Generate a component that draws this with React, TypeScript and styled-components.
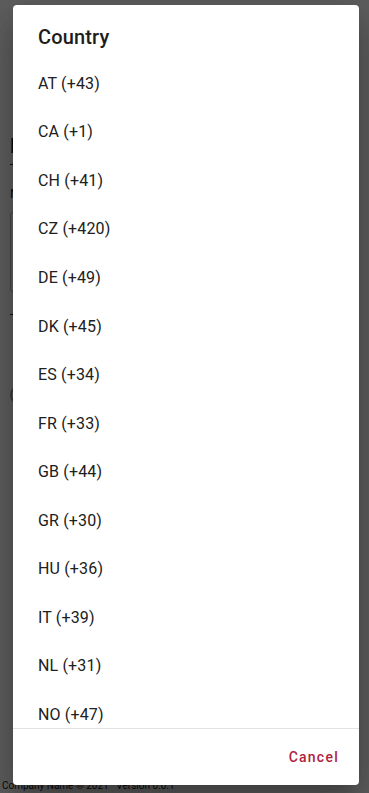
import React from 'react';
import styled, { createGlobalStyle } from 'styled-components';

const GlobalStyle = createGlobalStyle`
    html, body {
        margin: 0;
        padding: 0;
        height: 100%;
        overflow: hidden;
    }
    body {
        font-family: Roboto, 'Noto Sans', Arial, sans-serif;
        background: #fff;
    }
    #root {
        height: 100%;
    }
`;

const Page = styled.div`
    position: relative;
    width: 369px;
    height: 793px;
    display: flex;
    flex-direction: column;
    background: #fff;
    color: #222;
`;

const Section = styled.div`
    padding: 132px 10px 0;
    display: flex;
    flex-direction: column;
`;

const Heading = styled.h2`
    margin: 0;
    font-size: 20px;
    font-weight: 500;
    line-height: 28px;
`;

const Rule = styled.hr<{ $top: number }>`
    margin: ${(p) => p.$top}px 0 0;
    border: 0;
    border-top: 1px solid #333;
`;

const FieldLabel = styled.div`
    margin-top: 20px;
    font-size: 13px;
    line-height: 18px;
`;

const Input = styled.div`
    margin-top: 8px;
    height: 80px;
    border: 1px solid #bbb;
    border-radius: 4px;
`;

const Radio = styled.span`
    margin-top: 70px;
    width: 16px;
    height: 16px;
    border: 2px solid #999;
    border-radius: 50%;
`;

const Footer = styled.div`
    margin-top: auto;
    padding: 0 0 1px 2px;
    font-size: 10px;
    line-height: 12px;
    color: #222;
`;

const Overlay = styled.div`
    position: absolute;
    inset: 0;
    background: rgba(0, 0, 0, 0.63);
    display: flex;
    justify-content: flex-start;
    padding: 5px 0 8px 13px;
    box-sizing: border-box;
`;

const Dialog = styled.div`
    width: 346px;
    height: 780px;
    background: #fff;
    border-radius: 4px;
    display: flex;
    flex-direction: column;
    box-shadow: 0 11px 15px -7px rgba(0, 0, 0, 0.2), 0 24px 38px 3px rgba(0, 0, 0, 0.14),
        0 9px 46px 8px rgba(0, 0, 0, 0.12);
    overflow: hidden;
`;

const Title = styled.h1`
    margin: 0;
    padding: 20px 24px 10px 25px;
    font-size: 20px;
    font-weight: 500;
    line-height: 24px;
    color: #1d1d1d;
    letter-spacing: 0.15px;
`;

const List = styled.ul`
    flex: 1;
    margin: 0;
    padding: 0;
    list-style: none;
    overflow: hidden;
    border-bottom: 1px solid #e2e2e2;
`;

const Item = styled.li`
    height: 48.55px;
    padding: 0 24px 0 25px;
    display: flex;
    align-items: center;
    font-size: 16px;
    color: #202020;
    letter-spacing: 0.15px;
`;

const Actions = styled.div`
    height: 56px;
    display: flex;
    justify-content: flex-end;
    align-items: center;
    padding: 0 20px 0 8px;
`;

const TextButton = styled.button`
    border: 0;
    background: none;
    padding: 0;
    font-family: Roboto, Arial, sans-serif;
    font-size: 14px;
    font-weight: 500;
    letter-spacing: 1.25px;
    color: #b1223e;
    cursor: pointer;
`;

const countries = [
    ['AT', '43'],
    ['CA', '1'],
    ['CH', '41'],
    ['CZ', '420'],
    ['DE', '49'],
    ['DK', '45'],
    ['ES', '34'],
    ['FR', '33'],
    ['GB', '44'],
    ['GR', '30'],
    ['HU', '36'],
    ['IT', '39'],
    ['NL', '31'],
    ['NO', '47'],
];

const App = () => {
    return (
        <>
            <GlobalStyle />
            <Page>
                <Section>
                    <Heading>Login</Heading>
                    <Rule $top={4} />
                    <FieldLabel>Number</FieldLabel>
                    <Input />
                    <Rule $top={21} />
                    <Radio />
                </Section>
                <Footer>Company Name © 2021 · Version 0.0.1</Footer>
                <Overlay>
                    <Dialog>
                        <Title>Country</Title>
                        <List>
                            {countries.map(([code, dial]) => (
                                <Item key={code}>
                                    {code} (+{dial})
                                </Item>
                            ))}
                        </List>
                        <Actions>
                            <TextButton>Cancel</TextButton>
                        </Actions>
                    </Dialog>
                </Overlay>
            </Page>
        </>
    );
};

export default App;
